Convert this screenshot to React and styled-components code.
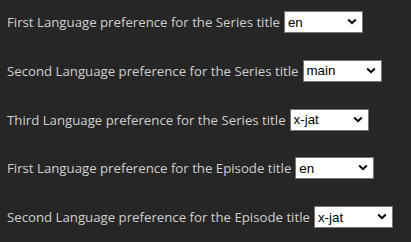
import React from "react";
import styled, { createGlobalStyle } from "styled-components";

const Global = createGlobalStyle`
  html, body { margin: 0; padding: 0; background: #262626; }
  body { font-family: "Open Sans", "Noto Sans", sans-serif; }
`;

const Page = styled.div`
  display: flex;
  flex-direction: column;
  gap: 26.75px;
  padding: 11px 0 0 7px;
  width: 411px;
  height: 242px;
  box-sizing: border-box;
`;

const Row = styled.div`
  display: flex;
  align-items: center;
  gap: 4px;
  height: 22px;
`;

const Label = styled.label`
  color: #cfcfcf;
  font-size: 13.22px;
  letter-spacing: 0;
  white-space: nowrap;
`;

const SelectWrap = styled.span`
  position: relative;
  display: inline-flex;
  width: 79px;
  height: 22px;
`;

const Select = styled.select`
  appearance: none;
  -webkit-appearance: none;
  width: 100%;
  height: 100%;
  box-sizing: border-box;
  background: #fff;
  color: #000;
  border: 1px solid #767676;
  border-radius: 0;
  font-family: "Liberation Sans", Arial, sans-serif;
  font-size: 13.33px;
  padding: 0 0 0 3px;
  margin: 0;
  outline: none;
`;

const Chevron = styled.svg`
  position: absolute;
  right: 6px;
  top: 7px;
  width: 10px;
  height: 7px;
  pointer-events: none;
`;

const rows = [
  { label: "First Language preference for the Series title", value: "en" },
  { label: "Second Language preference for the Series title", value: "main" },
  { label: "Third Language preference for the Series title", value: "x-jat" },
  { label: "First Language preference for the Episode title", value: "en" },
  { label: "Second Language preference for the Episode title", value: "x-jat" },
];

const options = ["en", "main", "x-jat", "x-kat", "ja"];

export default function App() {
  return (
    <>
      <Global />
      <Page>
        {rows.map((r, i) => (
          <Row key={i}>
            <Label>{r.label}</Label>
            <SelectWrap>
              <Select defaultValue={r.value}>
                {options.map((o) => (
                  <option key={o} value={o}>{o}</option>
                ))}
              </Select>
              <Chevron viewBox="0 0 10 7">
                <polyline points="1.2,1.5 5,5.2 8.8,1.5" fill="none" stroke="#000" strokeWidth="2" />
              </Chevron>
            </SelectWrap>
          </Row>
        ))}
      </Page>
    </>
  );
}
